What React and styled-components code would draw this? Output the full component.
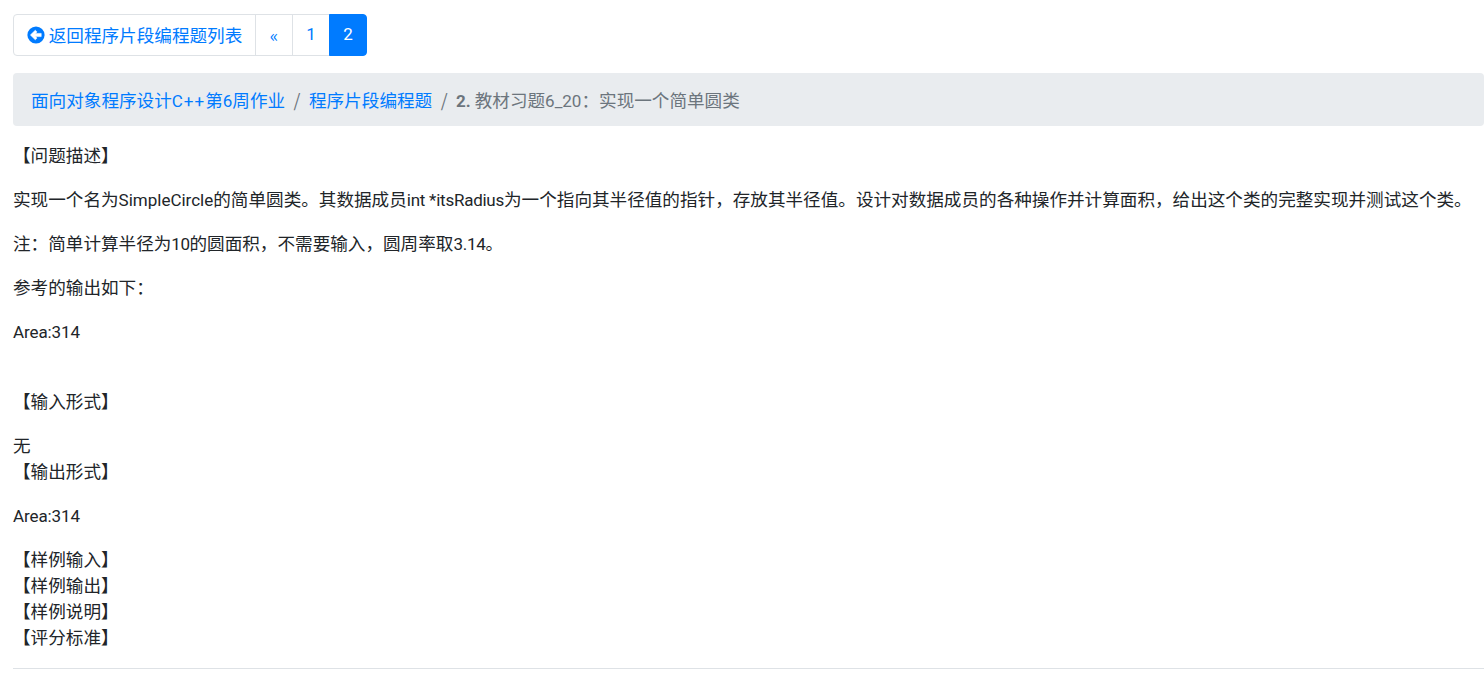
import React from "react";
import styled, { createGlobalStyle } from "styled-components";

const Global = createGlobalStyle`
  html, body { margin: 0; padding: 0; background: #fff; overflow: hidden; }
  body { font-family: "Noto Sans CJK SC", sans-serif; font-size: 17.6px; line-height: 1.5; color: #212529; }
  * { box-sizing: border-box; }
`;
const Latin = styled.span`
  font-family: Roboto, sans-serif;
  font-size: 17px;
  font-weight: ${p => p.$weight ?? 400};
  letter-spacing: ${p => p.$ls ?? 0}px;
`;
const Page = styled.div`
  width: 1499px;
  padding: 14px 15px 0 13px;
  height: 687px;
  overflow: hidden;
`;
const Pager = styled.ul`
  display: flex; list-style: none; margin: 0 0 17px; padding: 0; height: 42px;
`;
const PageItem = styled.li`
  display: flex; align-items: center; justify-content: center; gap: 4px;
  width: ${p => p.$w}px;
  border: 1px solid ${p => (p.$active ? "#007bff" : "#dee2e6")};
  margin-left: ${p => (p.$first ? 0 : "-1px")};
  background: ${p => (p.$active ? "#007bff" : "#fff")};
  color: ${p => (p.$active ? "#fff" : "#007bff")};
  border-radius: ${p => (p.$first ? "4px 0 0 4px" : p.$last ? "0 4px 4px 0" : "0")};
`;
const Crumbs = styled.nav`
  display: flex; align-items: center; height: 53px; background: #e9ecef;
  border-radius: 4px; padding: 2px 18px 0; margin-bottom: 18px;
`;
const CrumbLink = styled.span`color: #007bff;`;
const Sep = styled.span`color: #6c757d; padding: 0 8.5px;`;
const Current = styled.span`color: #6c757d;`;
const Para = styled.p`
  margin: 0 0 ${p => p.$mb ?? 18}px; height: 26px; line-height: 22px; white-space: nowrap;
`;
const Rule = styled.hr`border: 0; border-top: 1px solid #dee2e6; margin: 16px 0 0;`;

const Back = () => (
  <svg width="18" height="18" viewBox="0 0 18 18">
    <circle cx="9" cy="9" r="8.6" fill="#007bff" />
    <path d="M3.4 9 8.3 4.2 10 5.900 8.300 7.400H14.200V10.600H8.300L10 12.100 8.300 13.800Z" fill="#fff" stroke="#fff" strokeWidth=".6" strokeLinejoin="round" />
  </svg>
);

export default function App() {
  return (
    <Page>
      <Global />
      <Pager>
        <PageItem $first $w={243}><Back />返回程序片段编程题列表</PageItem>
        <PageItem $w={38}>«</PageItem>
        <PageItem $w={38}><Latin>1</Latin></PageItem>
        <PageItem $w={38} $active $last><Latin>2</Latin></PageItem>
      </Pager>
      <Crumbs>
        <CrumbLink>面向对象程序设计<Latin $ls={1}>C++</Latin>第<Latin>6</Latin>周作业</CrumbLink>
        <Sep>/</Sep>
        <CrumbLink>程序片段编程题</CrumbLink>
        <Sep>/</Sep>
        <Current><b><Latin $weight={700}>2.</Latin></b> 教材习题<Latin>6_20</Latin>：实现一个简单圆类</Current>
      </Crumbs>
      <Para>【问题描述】</Para>
      <Para>实现一个名为<Latin>SimpleCircle</Latin>的简单圆类。其数据成员<Latin $ls={-0.25}>int *itsRadius</Latin>为一个指向其半径值的指针，存放其半径值。设计对数据成员的各种操作并计算面积，给出这个类的完整实现并测试这个类。</Para>
      <Para>注：简单计算半径为<Latin $ls={-0.5}>10</Latin>的圆面积，不需要输入，圆周率取<Latin $ls={-0.25}>3.14</Latin>。</Para>
      <Para>参考的输出如下：</Para>
      <Para $mb={44}><Latin $ls={-0.1}>Area:314</Latin></Para>
      <Para>【输入形式】</Para>
      <Para $mb={0}>无</Para>
      <Para>【输出形式】</Para>
      <Para><Latin $ls={-0.1}>Area:314</Latin></Para>
      <Para $mb={0}>【样例输入】</Para>
      <Para $mb={0}>【样例输出】</Para>
      <Para $mb={0}>【样例说明】</Para>
      <Para $mb={0}>【评分标准】</Para>
      <Rule />
    </Page>
  );
}
